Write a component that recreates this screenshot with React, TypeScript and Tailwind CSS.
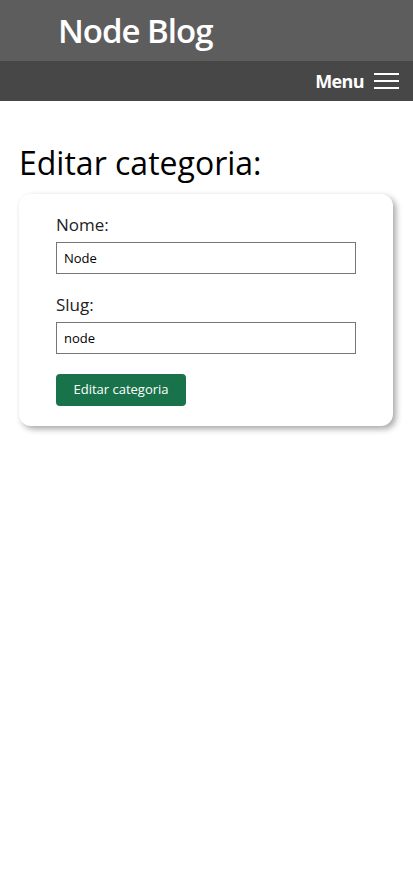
import { useState } from 'react';

const font = { fontFamily: '"Open Sans", "Noto Sans", sans-serif' };

function Hamburger() {
  return (
    <span className="flex w-[25px] flex-col gap-[5px]">
      <span className="h-[2px] w-full bg-white" />
      <span className="h-[2px] w-full bg-white" />
      <span className="h-[2px] w-full bg-white" />
    </span>
  );
}

function Field({ label, value, onChange }: { label: string; value: string; onChange: (v: string) => void }) {
  return (
    <label className="flex flex-col">
      <span className="text-[17px] leading-[24px] text-[#222]">{label}</span>
      <input
        className="mt-[5px] h-[32px] w-[300px] border border-[#767676] bg-white px-[7px] text-[13px] text-black outline-none"
        value={value}
        onChange={(e) => onChange(e.target.value)}
      />
    </label>
  );
}

export default function App() {
  const [nome, setNome] = useState('Node');
  const [slug, setSlug] = useState('node');

  return (
    <div className="min-h-[892px] bg-white" style={font}>
      <header className="flex h-[61px] items-center bg-[#5d5d5d] pl-[58px]">
        <span className="text-[33px] font-semibold leading-[61px] tracking-[-1px] text-white">Node Blog</span>
      </header>
      <nav className="flex h-[40px] items-center justify-end gap-[10px] bg-[#474747] pr-[14px]">
        <span className="text-[18px] font-bold tracking-[-0.6px] text-white">Menu</span>
        <Hamburger />
      </nav>

      <main className="px-[19px] pt-[42px]">
        <h1 className="mb-[11px] text-[32px] leading-[40px] font-medium text-black">Editar categoria:</h1>
        <form
          className="flex w-[374px] flex-col gap-[19px] rounded-[12px] bg-white px-[37px] pt-[19px] pb-[20px] shadow-[3px_3px_6px_rgba(0,0,0,0.35)]"
          onSubmit={(e) => e.preventDefault()}
        >
          <Field label="Nome:" value={nome} onChange={setNome} />
          <Field label="Slug:" value={slug} onChange={setSlug} />
          <div className="pt-px">
            <button type="submit" className="h-[32px] w-[130px] rounded-[4px] bg-[#19734a] text-[13px] text-white">
              Editar categoria
            </button>
          </div>
        </form>
      </main>
    </div>
  );
}
